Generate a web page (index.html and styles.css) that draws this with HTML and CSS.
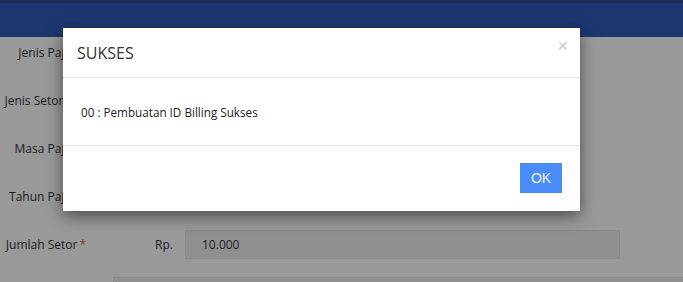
FILE: index.html
```html
<!DOCTYPE html>
<html>
<head>
<meta charset="utf-8">
<link rel="stylesheet" href="styles.css">
</head>
<body>
<div class="topbar"></div>
<div class="form">
  <div class="row"><label class="lbl">Jenis Pajak<span class="req">*</span></label></div>
  <div class="row"><label class="lbl">Jenis Setoran<span class="req">*</span></label></div>
  <div class="row"><label class="lbl">Masa Pajak<span class="req">*</span></label></div>
  <div class="row"><label class="lbl">Tahun Pajak<span class="req">*</span></label></div>
  <div class="row"><label class="lbl">Jumlah Setor<span class="req">*</span></label><span class="cur">Rp.</span><div class="input">10.000</div></div>
  <div class="row last"><div class="spacer"></div><div class="input wide"></div></div>
</div>
<div class="modal">
  <div class="m-head"><h4 class="m-title">SUKSES</h4><span class="close">×</span></div>
  <div class="m-body">00 : Pembuatan ID Billing Sukses</div>
  <div class="m-foot"><button class="ok">OK</button></div>
</div>
</body>
</html>
```
FILE: styles.css
```css
html, body {
  margin: 0;
  height: 100%;
  overflow: hidden;
}
body {
  background: #999999;
  font-family: "Open Sans", "Liberation Sans", sans-serif;
  font-size: 12px;
  color: #1e1e1e;
  position: relative;
}
.topbar {
  height: 37px;
  background: #1c3770;
  border-top: 3px solid #1f2e55;
  box-sizing: border-box;
}
.form {
  display: flex;
  flex-direction: column;
  gap: 18px;
}
.row {
  display: flex;
  align-items: center;
  height: 30px;
}
.row.last { height: 10px; align-items: flex-start; }
.lbl {
  width: 86px;
  flex: none;
  white-space: nowrap;
  display: flex;
  justify-content: flex-end;
}
.req {
  color: #7a3a3a;
  margin-left: 2px;
}
.cur {
  margin-left: 69px;
  width: 30px;
}
.input {
  width: 435px;
  height: 29px;
  box-sizing: border-box;
  background: #909090;
  border: 1px solid #8b8b8b;
  padding-left: 16px;
  display: flex;
  align-items: center;
  font-size: 12px;
  color: #222;
}
.spacer { width: 113px; flex: none; }
.input.wide { flex: 1; width: auto; height: 10px; border-right: none; }
.modal {
  position: absolute;
  left: 63px;
  top: 28px;
  width: 517px;
  background: #fff;
  box-shadow: 0 5px 15px rgba(0,0,0,.5);
  color: #333;
}
.m-head {
  height: 50px;
  box-sizing: border-box;
  border-bottom: 1px solid #e5e5e5;
  display: flex;
  align-items: center;
  padding: 0 14px;
  position: relative;
}
.m-title {
  margin: 0;
  font-weight: 400;
  font-size: 16px;
  color: #333;
}
.close {
  position: absolute;
  right: 12px;
  top: 8px;
  font-family: "Liberation Sans", sans-serif;
  font-size: 18px;
  color: #c8c8c8;
}
.m-body {
  height: 67px;
  box-sizing: border-box;
  padding: 0 18px;
  display: flex;
  align-items: center;
  font-size: 11.7px;
  color: #222;
}
.m-foot {
  border-top: 1px solid #e5e5e5;
  height: 66px;
  box-sizing: border-box;
  padding: 17px 18px 0;
  display: flex;
  justify-content: flex-end;
  align-items: flex-start;
}
.ok {
  width: 42px;
  height: 30px;
  border: none;
  background: #4a8cf7;
  color: #eef4ff;
  font-family: "Liberation Sans", sans-serif;
  font-size: 14px;
  padding: 0;
}
```
